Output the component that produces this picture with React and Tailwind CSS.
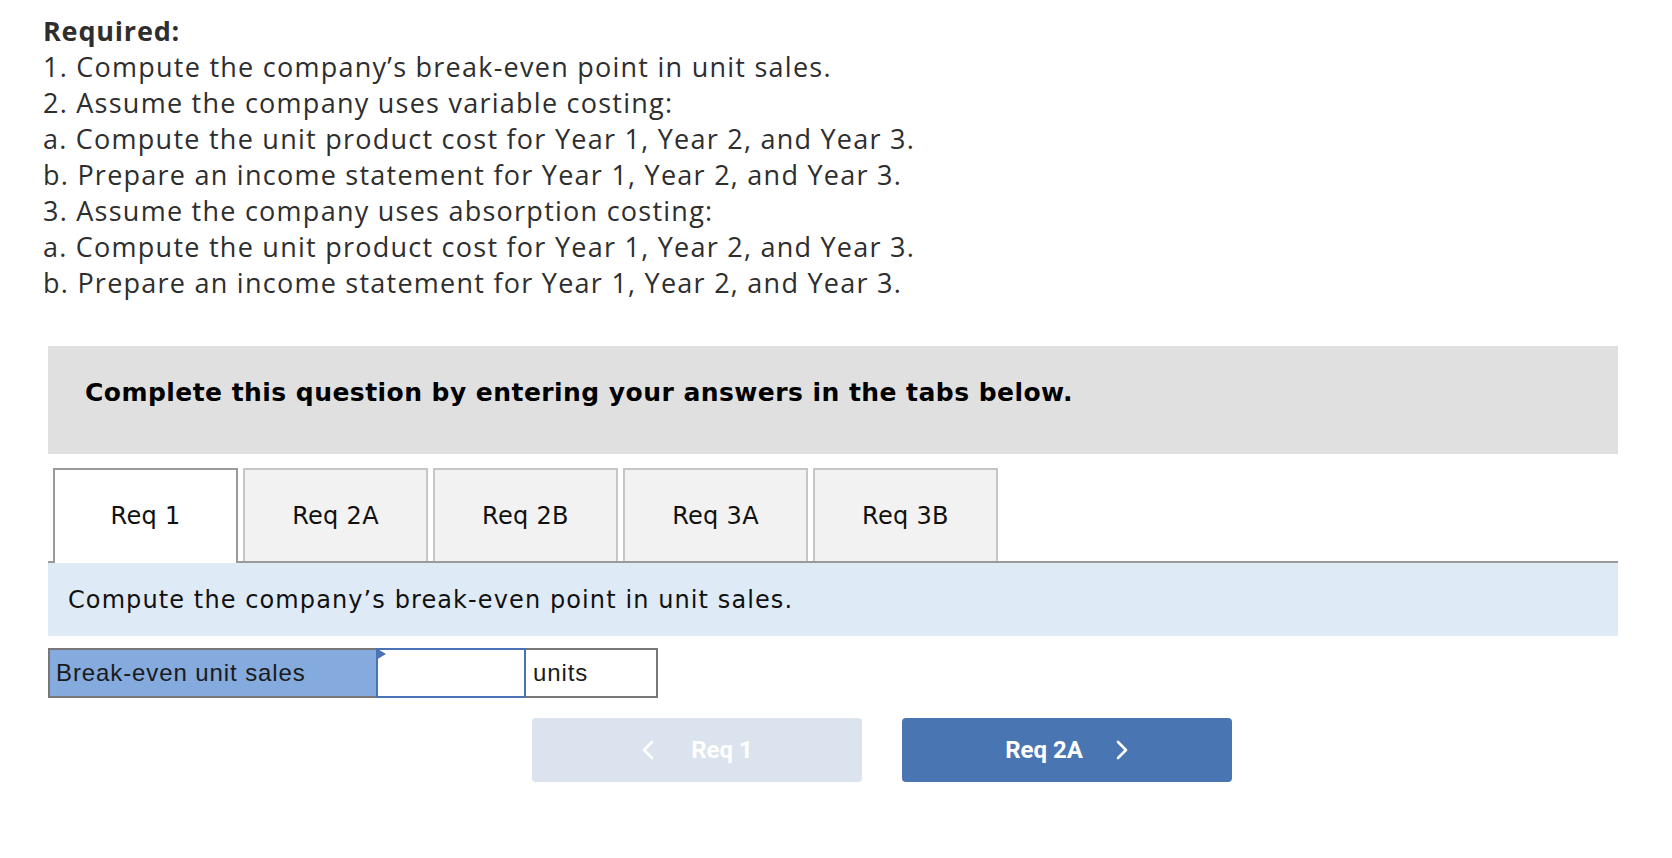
const tabs = ["Req 1", "Req 2A", "Req 2B", "Req 3A", "Req 3B"];

function Chevron({ dir = "right", className = "" }) {
  return (
    <svg
      className={className}
      width="14"
      height="20"
      viewBox="0 0 14 20"
      fill="none"
      stroke="currentColor"
      strokeWidth="2.6"
      strokeLinecap="round"
      strokeLinejoin="round"
    >
      {dir === "left" ? <path d="M11 2 L3 10 L11 18" /> : <path d="M3 2 L11 10 L3 18" />}
    </svg>
  );
}

export default function App() {
  const verdana = { fontFamily: '"DejaVu Sans", Verdana, sans-serif' };

  return (
    <div className="w-[1672px] h-[858px] bg-white overflow-hidden">
      {/* 문제 지시문 */}
      <div
        className="pl-[43px] pt-[13px] text-[27px] leading-[36px] tracking-[1.25px] text-[#2e2e2e]"
        style={{ fontFamily: '"Open Sans", Lato, sans-serif' }}
      >
        <p className="font-bold tracking-[0.8px]">Required:</p>
        <p>1. Compute the company’s break-even point in unit sales.</p>
        <p>2. Assume the company uses variable costing:</p>
        <p>a. Compute the unit product cost for Year 1, Year 2, and Year 3.</p>
        <p>b. Prepare an income statement for Year 1, Year 2, and Year 3.</p>
        <p>3. Assume the company uses absorption costing:</p>
        <p>a. Compute the unit product cost for Year 1, Year 2, and Year 3.</p>
        <p>b. Prepare an income statement for Year 1, Year 2, and Year 3.</p>
      </div>

      <div className="ml-[48px] w-[1570px] mt-[45px]">
        {/* 안내 박스 */}
        <div className="h-[108px] bg-[#e0e0e0] pl-[37px] pt-[34px]">
          <p className="text-[25px] leading-[26px] font-bold tracking-[0.45px] text-black" style={verdana}>
            Complete this question by entering your answers in the tabs below.
          </p>
        </div>

        {/* 탭 */}
        <div className="mt-[14px] flex items-start gap-[5px] pl-[5px] border-b-2 border-[#9a9a9a]">
          {tabs.map((t, i) =>
            i === 0 ? (
              <div
                key={t}
                className="relative z-10 w-[185px] h-[95px] -mb-[2px] pb-[2px] bg-white border-2 border-b-0 border-[#9a9a9a] flex items-center justify-center text-[24px] tracking-[0.3px] text-[#111]"
                style={verdana}
              >
                {t}
              </div>
            ) : (
              <div
                key={t}
                className="w-[185px] h-[93px] bg-[#f2f2f2] border-2 border-b-0 border-[#c6c6c6] flex items-center justify-center text-[24px] tracking-[0.3px] text-[#111]"
                style={verdana}
              >
                {t}
              </div>
            )
          )}
        </div>

        {/* 설명 줄 */}
        <div className="h-[73px] bg-[#dfeaf7] flex items-center pl-[20px]">
          <p className="text-[24px] tracking-[1.1px] text-[#111]" style={verdana}>
            Compute the company’s break-even point in unit sales.
          </p>
        </div>

        {/* 입력 행 */}
        <div
          className="mt-[12px] flex h-[50px] text-[24px] tracking-[0.9px] text-[#1a1a1a]"
          style={{ fontFamily: '"Liberation Sans", Arial, sans-serif' }}
        >
          <div className="w-[328px] bg-[#84aade] border-2 border-r-0 border-[#777] flex items-center pl-[6px]">
            Break-even unit sales
          </div>
          <div className="relative w-[150px] bg-white border-2 border-[#4a72b4]">
            <span className="absolute -left-[2px] -top-[2px] w-0 h-0 border-y-[6px] border-y-transparent border-l-[10px] border-l-[#4a72b4]" />
          </div>
          <div className="w-[132px] bg-white border-2 border-l-0 border-[#777] flex items-center pl-[7px]">
            units
          </div>
        </div>

        {/* 이전/다음 버튼 */}
        <div
          className="mt-[20px] ml-[484px] flex gap-[40px]"
          style={{ fontFamily: 'Roboto, "Open Sans", sans-serif' }}
        >
          <button className="w-[330px] h-[64px] rounded-[4px] bg-[#dae3ee] text-white flex items-center justify-center gap-[36px]">
            <Chevron dir="left" />
            <span className="text-[24px] font-bold">Req 1</span>
          </button>
          <button className="w-[330px] h-[64px] rounded-[4px] bg-[#4a75b3] text-white flex items-center justify-center gap-[32px]">
            <span className="text-[24px] font-bold">Req 2A</span>
            <Chevron dir="right" />
          </button>
        </div>
      </div>
    </div>
  );
}
